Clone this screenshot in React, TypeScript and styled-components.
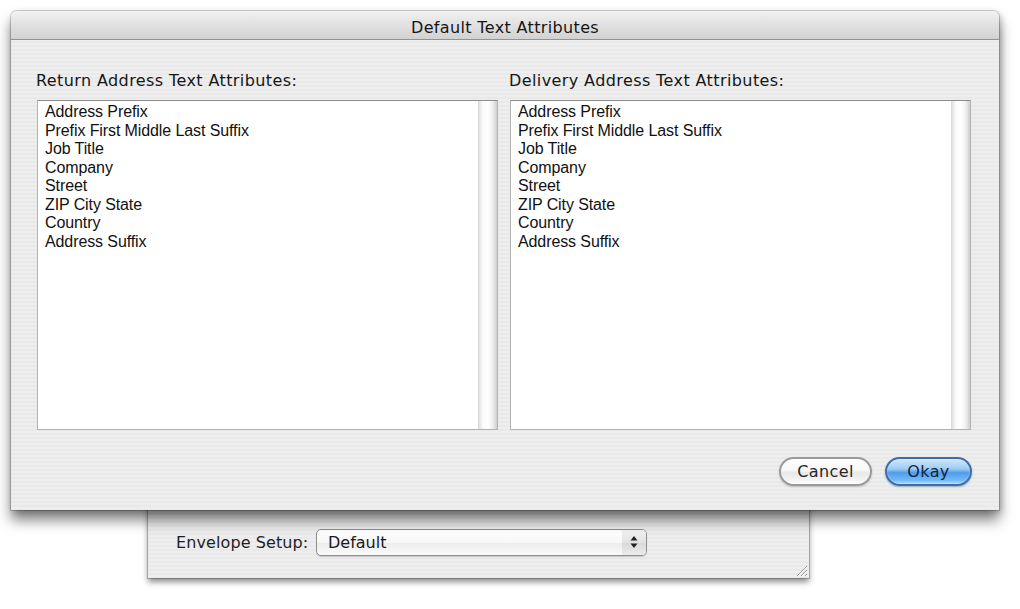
import React from "react";
import styled, { createGlobalStyle } from "styled-components";

const Global = createGlobalStyle`
  html, body { margin: 0; padding: 0; background: #ffffff; }
  #root { width: 1020px; height: 609px; overflow: hidden; }
`;

const UI = `"DejaVu Sans", "Liberation Sans", sans-serif`;

const Stage = styled.div`
  width: 1020px;
  height: 609px;
  padding: 11px 0 0 11px;
  box-sizing: border-box;
  display: flex;
  flex-direction: column;
  align-items: flex-start;
  background: #ffffff;
`;

const stripes = `repeating-linear-gradient(180deg, #eeeeee 0px, #eeeeee 2px, #e9e9e9 2px, #e9e9e9 4px)`;

const Dialog = styled.div`
  position: relative;
  z-index: 2;
  width: 988px;
  height: 499px;
  border-radius: 6px 6px 0 0;
  overflow: hidden;
  display: flex;
  flex-direction: column;
  box-shadow: 0 10px 14px rgba(0, 0, 0, 0.5), 0 0 0 1px rgba(0, 0, 0, 0.18),
    2px 2px 6px rgba(0, 0, 0, 0.2);
  background: ${stripes};
`;

const TitleBar = styled.div`
  height: 29px;
  flex: none;
  display: flex;
  align-items: center;
  justify-content: center;
  background: linear-gradient(180deg, #f2f2f2 0%, #e4e4e4 40%, #d2d2d2 100%);
  border-bottom: 1px solid #929292;
  font-family: ${UI};
  font-size: 16px;
  color: #151515;
  letter-spacing: 0.35px;
  padding-top: 5px;
  box-sizing: border-box;
`;

const Body = styled.div`
  flex: 1;
  display: flex;
  flex-direction: column;
  padding: 32px 27px 0 25px;
`;

const Columns = styled.div`
  display: grid;
  grid-template-columns: 462px 462px;
  column-gap: 11px;
`;

const Column = styled.div`
  display: flex;
  flex-direction: column;
`;

const Label = styled.div`
  font-family: ${UI};
  font-size: 16px;
  letter-spacing: 0.4px;
  line-height: 18px;
  color: #161616;
  height: 18px;
  margin-bottom: 10px;
`;

const ListBox = styled.div`
  margin-left: 1px;
  height: 330px;
  box-sizing: border-box;
  border: 1px solid #b3b3b3;
  border-top-color: #8c8c8c;
  background: #ffffff;
  display: flex;
`;

const Items = styled.div`
  flex: 1;
  padding: 2px 0 0 7px;
  font-family: "Liberation Sans", Arial, sans-serif;
  font-size: 16px;
  line-height: 18.5px;
  color: #111111;
`;

const Item = styled.div`
  white-space: nowrap;
  letter-spacing: -0.1px;
`;

const ScrollTrack = styled.div`
  width: 19px;
  flex: none;
  background: linear-gradient(
    90deg,
    #d6d6d6 0px,
    #e8e8e8 2px,
    #fbfbfb 5px,
    #ffffff 10px,
    #f2f2f2 14px,
    #dedede 17px,
    #cdcdcd 19px
  );
`;

const ButtonRow = styled.div`
  display: flex;
  justify-content: flex-end;
  gap: 13px;
  margin-top: 27px;
`;

const Button = styled.button<{ $primary?: boolean }>`
  height: 29px;
  width: ${(p) => (p.$primary ? "87px" : "93px")};
  border-radius: 15px;
  font-family: ${UI};
  font-size: 16px;
  letter-spacing: 0.4px;
  padding: 0 0 1px;
  cursor: default;
  color: ${(p) => (p.$primary ? "#14233d" : "#262626")};
  border: 2px solid ${(p) => (p.$primary ? "#3d6ea8" : "#9a9a9a")};
  background: ${(p) =>
    p.$primary
      ? "linear-gradient(180deg, #d2e8fc 0%, #9ccbf4 40%, #4f9de8 55%, #72b9fa 85%, #b0dbff 100%)"
      : "linear-gradient(180deg, #ffffff 0%, #f7f7f7 45%, #e8e8e8 55%, #f4f4f4 85%, #ffffff 100%)"};
  box-shadow: ${(p) =>
    p.$primary
      ? "0 1px 2px rgba(0,40,100,0.35), inset 0 0 2px rgba(255,255,255,0.6)"
      : "0 1px 2px rgba(0,0,0,0.2), inset 0 0 2px rgba(255,255,255,0.8)"};
`;

const BackWindow = styled.div`
  position: relative;
  z-index: 1;
  margin-top: -15px;
  margin-left: 137px;
  width: 661px;
  height: 83px;
  box-sizing: border-box;
  padding: 33px 0 0 28px;
  background: ${stripes};
  box-shadow: 0 4px 6px rgba(0, 0, 0, 0.45), 0 0 0 1px rgba(0, 0, 0, 0.2);
  display: flex;
  flex-direction: column;
`;

const SetupRow = styled.div`
  display: flex;
  align-items: center;
  height: 28px;
  gap: 10px;
`;

const SetupLabel = styled.span`
  font-family: ${UI};
  font-size: 16px;
  letter-spacing: 0.1px;
  color: #1e1e1e;
  width: 130px;
  white-space: nowrap;
`;

const Popup = styled.div`
  width: 331px;
  height: 27px;
  box-sizing: border-box;
  border: 1px solid #8e8e8e;
  border-radius: 5px;
  background: linear-gradient(180deg, #ffffff 0%, #f7f7f7 50%, #ececec 51%, #fafafa 100%);
  display: flex;
  align-items: stretch;
  box-shadow: 0 1px 1px rgba(0, 0, 0, 0.15);
`;

const PopupText = styled.span`
  flex: 1;
  display: flex;
  align-items: center;
  padding-left: 11px;
  font-family: ${UI};
  font-size: 16px;
  color: #1a1a1a;
`;

const PopupArrows = styled.span`
  width: 24px;
  display: flex;
  align-items: center;
  justify-content: center;
  background: linear-gradient(180deg, #f2f2f2 0%, #e2e2e2 50%, #d8d8d8 51%, #ececec 100%);
  border-radius: 0 4px 4px 0;
`;

const Grip = styled.div`
  position: absolute;
  right: 1px;
  bottom: 1px;
  width: 14px;
  height: 14px;
`;

const entries = [
  "Address Prefix",
  "Prefix First Middle Last Suffix",
  "Job Title",
  "Company",
  "Street",
  "ZIP City State",
  "Country",
  "Address Suffix",
];

function AttrList({ title }: { title: string }) {
  return (
    <Column>
      <Label>{title}</Label>
      <ListBox>
        <Items>
          {entries.map((t) => (
            <Item key={t}>{t}</Item>
          ))}
        </Items>
        <ScrollTrack />
      </ListBox>
    </Column>
  );
}

export default function App() {
  return (
    <>
      <Global />
      <Stage>
        <Dialog>
          <TitleBar>Default Text Attributes</TitleBar>
          <Body>
            <Columns>
              <AttrList title="Return Address Text Attributes:" />
              <AttrList title="Delivery Address Text Attributes:" />
            </Columns>
            <ButtonRow>
              <Button>Cancel</Button>
              <Button $primary>Okay</Button>
            </ButtonRow>
          </Body>
        </Dialog>
        <BackWindow>
          <SetupRow>
            <SetupLabel>Envelope Setup:</SetupLabel>
            <Popup>
              <PopupText>Default</PopupText>
              <PopupArrows>
                <svg width="8" height="14" viewBox="0 0 8 14">
                  <path d="M4 1 L7.5 5.5 L0.5 5.5 Z" fill="#222" />
                  <path d="M4 13 L7.5 8.5 L0.5 8.5 Z" fill="#222" />
                </svg>
              </PopupArrows>
            </Popup>
          </SetupRow>
          <Grip>
            <svg width="14" height="14" viewBox="0 0 14 14">
              <path d="M13 3 L3 13 M13 7 L7 13 M13 11 L11 13" stroke="#9a9a9a" strokeWidth="1" />
              <path d="M13 4 L4 13 M13 8 L8 13 M13 12 L12 13" stroke="#fafafa" strokeWidth="1" />
            </svg>
          </Grip>
        </BackWindow>
      </Stage>
    </>
  );
}
